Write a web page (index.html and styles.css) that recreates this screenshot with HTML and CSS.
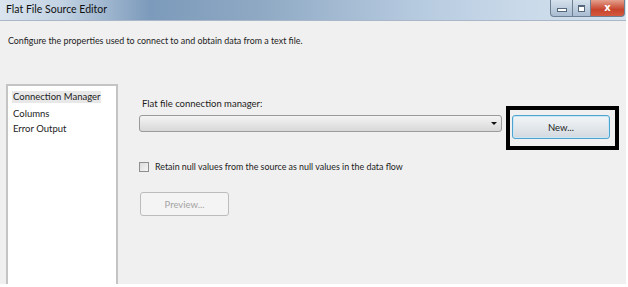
FILE: index.html
```html
<!DOCTYPE html>
<html>
  <head>
    <title>Flat File Source Editor</title>
    <link rel="stylesheet" href="styles.css">
  </head>
  <body>
    <div class="window">
      <div class="titlebar">
        <span class="title">Flat File Source Editor</span>
        <div class="caption-buttons">
          <div class="cap cap-min"><span></span></div>
          <div class="cap cap-max"><span></span></div>
          <div class="cap cap-close">x</div>
        </div>
      </div>

      <p class="intro">Configure the properties used to connect to and obtain data from a text file.</p>

      <div class="main">
        <ul class="pages">
          <li class="selected">Connection Manager</li>
          <li>Columns</li>
          <li>Error Output</li>
        </ul>

        <div class="content">
          <label class="field-label">Flat file connection manager:</label>
          <div class="combo-row">
            <div class="combo"><span class="arrow"></span></div>
            <button class="btn btn-new">New...</button>
          </div>

          <label class="check">
            <span class="box"></span>
            Retain null values from the source as null values in the data flow
          </label>

          <button class="btn btn-preview" disabled>Preview...</button>
        </div>
      </div>
    </div>
  </body>
</html>
```

FILE: styles.css
```css
body {
  margin: 0;
  background: #ffffff;
  font-family: Lato, "Open Sans", sans-serif;
  font-size: 9.5px;
  color: #1c1c1c;
}

.window {
  width: 626px;
  height: 284px;
  background: #f0f0f0;
  display: flex;
  flex-direction: column;
}

.titlebar {
  height: 20px;
  flex: none;
  display: flex;
  justify-content: space-between;
  align-items: flex-start;
  border-bottom: 1px solid #a9b8c8;
  background: linear-gradient(90deg, #dbe5ef 0px, #c3d3e3 60px, #7c9abb 150px, #8fa9c4 260px, #b7cbe0 420px, #c9d9e9 520px, #d5e2ee 626px);
}

.title {
  padding: 3px 0 0 6px;
  font-size: 10.5px;
  color: #101010;
}

.caption-buttons {
  display: flex;
  margin-right: 1px;
}

.cap {
  height: 16px;
  display: flex;
  align-items: center;
  justify-content: center;
  border: 1px solid #6d7f93;
  border-top: none;
  color: #ffffff;
}

.cap-min {
  width: 21px;
  border-radius: 0 0 0 4px;
  background: linear-gradient(#d5e1ec, #a8bcd1);
}

.cap-min span {
  width: 8px;
  height: 2px;
  margin-top: 4px;
  background: #ffffff;
  border: 1px solid #55677a;
}

.cap-max {
  width: 17px;
  border-left: none;
  background: linear-gradient(#d5e1ec, #a8bcd1);
}

.cap-max span {
  width: 5px;
  height: 4px;
  border: 1px solid #55677a;
  border-top-width: 2px;
  background: #ffffff;
}

.cap-close {
  width: 33px;
  border-left: none;
  border-radius: 0 0 4px 0;
  background: linear-gradient(#e4a08e, #c8442c 60%, #d35a3f);
  font-family: "DejaVu Sans", sans-serif;
  font-weight: bold;
  font-size: 10px;
  line-height: 1;
}

.intro {
  margin: 13px 0 0 8px;
  font-size: 8.9px;
  line-height: 13px;
}

.main {
  flex: 1;
  display: flex;
  margin-top: 37px;
}

.pages {
  list-style: none;
  margin: 0 0 0 6px;
  padding: 5px 0 0 4px;
  width: 104px;
  background: #ffffff;
  border: 2px solid #c4c4c4;
  border-bottom: none;
}

.pages li {
  height: 15px;
  line-height: 15px;
  padding-left: 1px;
  width: 88px;
}

.pages li.selected {
  background: #e8e8e8;
  height: 12px;
  line-height: 12px;
  margin-bottom: 3px;
}

.content {
  display: flex;
  flex-direction: column;
  align-items: flex-start;
  padding: 13px 0 0 21px;
}

.field-label {
  margin-left: 3px;
  line-height: 13px;
}

.combo-row {
  display: flex;
  align-items: flex-start;
  gap: 10px;
  margin-top: 5px;
}

.combo {
  width: 361px;
  height: 15px;
  position: relative;
  border: 1px solid #9a9a9a;
  border-radius: 3px;
  background: linear-gradient(#f4f4f4, #e6e6e6 50%, #d8d8d8);
}

.arrow {
  position: absolute;
  right: 4px;
  top: 6px;
  border-left: 3px solid transparent;
  border-right: 3px solid transparent;
  border-top: 3px solid #111111;
}

.btn {
  font-family: inherit;
  font-size: 9.5px;
  border-radius: 3px;
  padding: 0;
}

.btn-new {
  width: 98px;
  height: 24px;
  position: relative;
  color: #1c1c1c;
  border: 1px solid #4fa3cf;
  background: linear-gradient(#f2f5f7, #e3e8ec 50%, #d2d9de);
  box-shadow: inset 0 0 0 1px #c9e7f6;
}

/* black highlight drawn around the New button */
.btn-new::after {
  content: "";
  position: absolute;
  top: -10px;
  left: -7px;
  right: -10px;
  bottom: -12px;
  border: 4px solid #000000;
}

.check {
  display: flex;
  align-items: center;
  gap: 6px;
  margin-top: 21px;
  font-size: 8.9px;
  line-height: 13px;
}

.box {
  width: 8px;
  height: 8px;
  border: 1px solid #8e8f8f;
  background: linear-gradient(135deg, #dcdcdc, #f6f6f6);
}

.btn-preview {
  width: 89px;
  height: 24px;
  margin: 19px 0 0 1px;
  color: #a3a3a3;
  border: 1px solid #bcbcbc;
  background: #f4f4f4;
}
```
